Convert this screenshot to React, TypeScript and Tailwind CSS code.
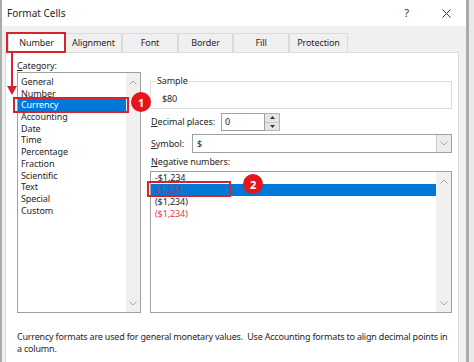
import React from 'react'

const tabs = [
  { label: 'Number', cls: 'w-[57px] bg-white' },
  { label: 'Alignment', cls: 'w-[57px] bg-[#f0f0f0]' },
  { label: 'Font', cls: 'w-[56px] bg-[#f0f0f0]' },
  { label: 'Border', cls: 'w-[55px] bg-[#f0f0f0]' },
  { label: 'Fill', cls: 'w-[56px] bg-[#f0f0f0]' },
  { label: 'Protection', cls: 'w-[59px] bg-[#f0f0f0]' },
]

const categories = [
  'General',
  'Number',
  'Currency',
  'Accounting',
  'Date',
  'Time',
  'Percentage',
  'Fraction',
  'Scientific',
  'Text',
  'Special',
  'Custom',
]

function Chevron({ up }: { up?: boolean }) {
  return (
    <svg width="8" height="5" viewBox="0 0 8 5">
      <path
        d={up ? 'M0.5 4.5 L4 1 L7.5 4.5' : 'M0.5 0.5 L4 4 L7.5 0.5'}
        fill="none"
        stroke="#a6a6a6"
        strokeWidth="1"
      />
    </svg>
  )
}

function ScrollStrip({ w }: { w: string }) {
  return (
    <div className={`${w} h-full bg-[#f0f0f0] flex flex-col items-center justify-between pt-[7px] pb-[6px]`}>
      <Chevron up />
      <Chevron />
    </div>
  )
}

function Badge({ n, cls }: { n: string; cls: string }) {
  return (
    <div
      className={`absolute ${cls} rounded-full bg-[#e4161b] text-white text-[11px] font-bold flex items-center justify-center leading-none`}
    >
      {n}
    </div>
  )
}

export default function App() {
  return (
    <div className="relative w-[474px] h-[362px] overflow-hidden bg-[#e9e9e9] font-['Noto_Sans',sans-serif] text-[9px] text-[#262626] tracking-[-0.1px]">
      <div className="flex flex-col w-[469px] h-full border-l-2 border-r-[3px] border-[#ababab] bg-[#f0f0f0]">
        {/* title bar */}
        <div className="h-[26px] shrink-0 bg-white flex items-center pl-[5px] pr-[15px]">
          <span className="text-[10px] tracking-normal">Format Cells</span>
          <span className="ml-auto mr-[33px] text-[11px] text-[#333]">?</span>
          <svg width="9" height="9" viewBox="0 0 9 9">
            <path d="M0.5 0.5 L8.5 8.5 M8.5 0.5 L0.5 8.5" stroke="#333" strokeWidth="1" />
          </svg>
        </div>

        {/* tabs */}
        <div className="h-[26px] shrink-0 flex items-end pl-[6px]">
          {tabs.map((t) => (
            <div
              key={t.label}
              className={`${t.cls} h-[19px] border-t border-l border-r border-[#dadada] flex items-center justify-center`}
            >
              {t.label}
            </div>
          ))}
        </div>

        {/* panel */}
        <div className="flex-1 ml-[3px] w-[454px] bg-white border-t border-l border-r border-[#dadada] pt-[7px] pl-[11px]">
          <div className="flex">
            {/* left column */}
            <div className="w-[124px] flex flex-col">
              <div className="h-[12px] leading-[12px]">
                <u className="underline-offset-1">C</u>ategory:
              </div>
              <div className="h-[241px] border border-[#a0a0a0] flex">
                <div className="flex-1 pt-[3px]">
                  {categories.map((c) => (
                    <div
                      key={c}
                      className={
                        c === 'Currency'
                          ? 'h-[11.7px] leading-[11.7px] pl-[3px] bg-[#0078d7] text-white'
                          : 'h-[11.7px] leading-[11.7px] pl-[3px]'
                      }
                    >
                      {c}
                    </div>
                  ))}
                </div>
                <ScrollStrip w="w-[14px]" />
              </div>
            </div>

            {/* right column */}
            <div className="ml-[9px] w-[302px] flex flex-col">
              <fieldset className="mt-[15px] border border-[#dcdcdc] px-[5px] pb-[3px]">
                <legend className="px-[1px] leading-[12px]">Sample</legend>
                <div className="pl-[6px] mt-[6px] leading-[12px]">$80</div>
              </fieldset>

              <div className="mt-[4px] h-[18px] flex items-center">
                <div className="w-[71px] pl-[1px]">
                  <u className="underline-offset-1">D</u>ecimal places:
                </div>
                <div className="w-[44px] h-[18px] border border-[#a0a0a0] flex items-center pl-[3px]">0</div>
                <div className="w-[15px] h-[18px] border-t border-r border-b border-[#b4b4b4] flex flex-col">
                  <div className="flex-1 bg-[#e5e5e5] border-b border-[#c8c8c8] flex items-center justify-center">
                    <svg width="5" height="3" viewBox="0 0 5 3">
                      <path d="M0 3 L2.5 0 L5 3 Z" fill="#333" />
                    </svg>
                  </div>
                  <div className="flex-1 bg-[#e5e5e5] flex items-center justify-center">
                    <svg width="5" height="3" viewBox="0 0 5 3">
                      <path d="M0 0 L2.5 3 L5 0 Z" fill="#333" />
                    </svg>
                  </div>
                </div>
              </div>

              <div className="mt-[3px] h-[19px] flex items-center">
                <div className="w-[42px] pl-[1px]">
                  <u className="underline-offset-1">S</u>ymbol:
                </div>
                <div className="flex-1 h-[19px] border border-[#a0a0a0] flex items-center">
                  <div className="flex-1 pl-[4px]">$</div>
                  <div className="w-[15px] h-full bg-[#ececec] border-l border-[#c8c8c8] flex items-center justify-center">
                    <Chevron />
                  </div>
                </div>
              </div>

              <div className="mt-[3px] h-[12px] leading-[12px] pl-[1px]">
                <u className="underline-offset-1">N</u>egative numbers:
              </div>

              <div className="mt-[3px] h-[142px] border border-[#a0a0a0] flex">
                <div className="flex-1">
                  <div className="h-[12px] leading-[12px] pl-[4px]">-$1,234</div>
                  <div className="h-[12px] leading-[12px] pl-[4px] bg-[#0078d7] text-[#9b3c7e]">$1,234</div>
                  <div className="h-[12px] leading-[12px] pl-[4px]">($1,234)</div>
                  <div className="h-[12px] leading-[12px] pl-[4px] text-[#e53935]">($1,234)</div>
                </div>
                <ScrollStrip w="w-[15px]" />
              </div>
            </div>
          </div>

          <p className="mt-[18px] leading-[11.5px] whitespace-nowrap tracking-[-0.2px]">
            Currency formats are used for general monetary values.&nbsp; Use Accounting formats to align decimal points in
            <br />a column.
          </p>
        </div>
      </div>

      {/* annotations */}
      <div className="absolute left-[6px] top-[32px] w-[60px] h-[21px] border-2 border-[#d3262c]" />
      <div className="absolute left-[11px] top-[53px] w-[2px] h-[36px] bg-[#d3262c]" />
      <svg className="absolute left-[7px] top-[86px]" width="10" height="9" viewBox="0 0 10 9">
        <path d="M0 0 L10 0 L5 9 Z" fill="#d3262c" />
      </svg>
      <div className="absolute left-[13px] top-[97px] w-[116px] h-[16px] border-2 border-[#d3262c]" />
      <Badge n="1" cls="left-[131px] top-[92px] w-[20px] h-[20px]" />
      <div className="absolute left-[147px] top-[181px] w-[84px] h-[16px] border-2 border-[#d3262c]" />
      <Badge n="2" cls="left-[243px] top-[174px] w-[20px] h-[20px]" />
    </div>
  )
}
